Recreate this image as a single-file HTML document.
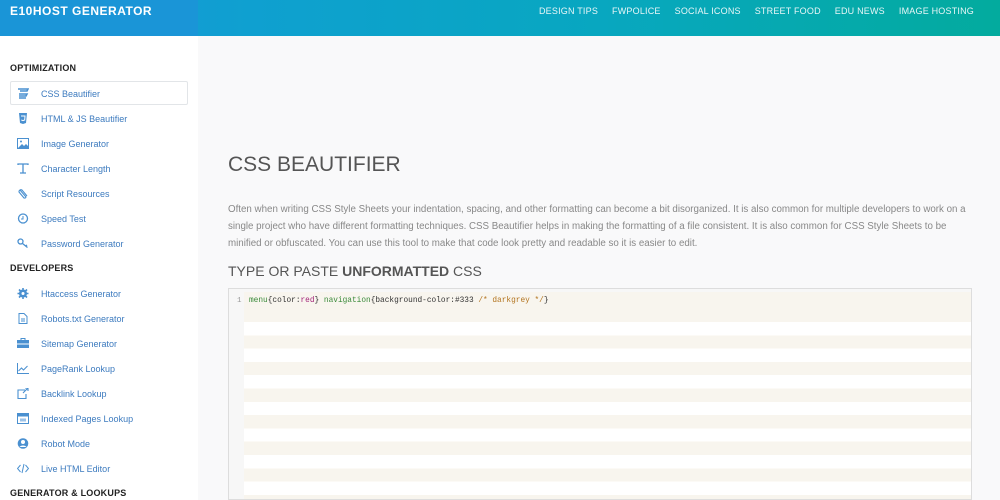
<!DOCTYPE html>
<html><head><meta charset="utf-8"><style>
*{margin:0;padding:0;box-sizing:border-box}
body{width:1000px;height:500px;overflow:hidden;background:#f9f9fa;font-family:"Liberation Sans",sans-serif;position:relative}
.hdr{position:absolute;left:0;top:0;width:1000px;height:36px;background:linear-gradient(90deg,#1b95d8 0%,#0fa0d0 25%,#08a7c0 60%,#03ab9e 100%)}
.logo{position:absolute;left:0;top:0;width:198px;height:36px;background:#1a95d7}
.logo span{position:absolute;left:10px;top:4px;color:#fff;font-weight:bold;font-size:12px;letter-spacing:.5px}
.nav{position:absolute;top:6px;right:26px;color:#e8f6f7;font-size:9px;letter-spacing:.2px;white-space:nowrap}
.nav span{margin-left:14px}
.side{position:absolute;left:0;top:36px;width:198px;height:464px;background:#fff}
.h{position:absolute;left:10px;font-size:9px;font-weight:bold;color:#222;letter-spacing:.2px}
.it{position:absolute;left:41px;font-size:9px;color:#3d7bbf}
.ic{position:absolute;left:17px;width:12px;height:11px;color:#4a90d0}
.sel{position:absolute;left:10px;top:81px;width:178px;height:24px;border:1px solid #e2e5e8;border-radius:2px;background:#fff}
h1{position:absolute;left:228px;top:153px;font-weight:normal;font-size:21px;color:#555}
.p{position:absolute;left:228px;font-size:9.75px;color:#888;white-space:nowrap}
h2{position:absolute;left:228px;top:263px;font-weight:normal;font-size:14px;color:#555}
.ed{position:absolute;left:228px;top:288px;width:744px;height:212px;border:1px solid #ddd;background:#f7f7f7}
.code{position:absolute;left:15px;top:3px;right:0;bottom:0;background:#f8f5ee;}
.stripes{position:absolute;left:0;right:0;top:30px;bottom:0;background:repeating-linear-gradient(180deg,#fff 0,#fff 13.3px,#f8f5ee 13.3px,#f8f5ee 26.6px)}
.ln{position:absolute;left:9px;top:9px;font-family:"Liberation Mono",monospace;font-size:7.5px;color:#999}
.cd{position:absolute;left:20px;top:8px;font-family:"Liberation Mono",monospace;font-size:7.8px;color:#333;white-space:nowrap}
</style></head><body>
<div class="hdr"></div>
<div class="logo"><span>E10HOST GENERATOR</span></div>
<div class="nav"><span>DESIGN TIPS</span><span>FWPOLICE</span><span>SOCIAL ICONS</span><span>STREET FOOD</span><span>EDU NEWS</span><span>IMAGE HOSTING</span></div>
<div class="side"></div>
<div class="sel"></div>
<div class="h" style="top:63px">OPTIMIZATION</div>
<div class="h" style="top:263px">DEVELOPERS</div>
<div class="h" style="top:488px">GENERATOR &amp; LOOKUPS</div>

<svg class="ic" style="top:88px" viewBox="0 0 12 11"><path d="M1 1h10l-1 2H3m-1 3h8l-1 2H2m0 2h7" stroke="#4a90d0" stroke-width="1.6" fill="none"/></svg>
<svg class="ic" style="top:113px" viewBox="0 0 12 11"><path d="M2 0h8l-1 10-3 1-3-1z" fill="#4a90d0"/><path d="M4 3h4l-.3 4-1.7.6-1.7-.6" stroke="#fff" fill="none"/></svg>
<svg class="ic" style="top:138px" viewBox="0 0 12 11"><rect x="0.5" y="0.5" width="11" height="10" fill="none" stroke="#4a90d0"/><path d="M1 10l4-4 2 2 2-2 2 2v2z" fill="#4a90d0"/><circle cx="4" cy="3.5" r="1" fill="#4a90d0"/></svg>
<svg class="ic" style="top:163px" viewBox="0 0 12 11"><path d="M1 2V1h10v1M6 1v9M3 10h6" stroke="#4a90d0" stroke-width="1.3" fill="none"/></svg>
<svg class="ic" style="top:188px" viewBox="0 0 12 11"><path d="M3 2l6 7a1.5 1.5 0 0 1-2 1L2 4a2 2 0 0 1 3-2l5 6" stroke="#4a90d0" stroke-width="1.1" fill="none"/></svg>
<svg class="ic" style="top:213px" viewBox="0 0 12 11"><circle cx="6" cy="5.5" r="4.5" fill="none" stroke="#4a90d0" stroke-width="1.3"/><path d="M6 3v3h-2" stroke="#4a90d0" fill="none"/></svg>
<svg class="ic" style="top:238px" viewBox="0 0 12 11"><circle cx="3.5" cy="3.5" r="2.5" fill="none" stroke="#4a90d0" stroke-width="1.3"/><path d="M5.5 5.5l5 4M8.5 8l1.5-1" stroke="#4a90d0" stroke-width="1.3" fill="none"/></svg>
<svg class="ic" style="top:288px" viewBox="0 0 12 11"><circle cx="6" cy="5.5" r="4" fill="#4a90d0"/><path d="M6 0v11M0.5 5.5h11M2 1.5l8 8M10 1.5l-8 8" stroke="#4a90d0" stroke-width="1.6"/><circle cx="6" cy="5.5" r="1.5" fill="#fff"/></svg>
<svg class="ic" style="top:313px" viewBox="0 0 12 11"><path d="M2 .5h5l3 3v7H2z" fill="none" stroke="#4a90d0"/><path d="M4 6h4M4 8h4" stroke="#4a90d0"/></svg>
<svg class="ic" style="top:338px" viewBox="0 0 12 11"><rect x="0" y="2" width="12" height="8" fill="#4a90d0"/><rect x="4" y="0.5" width="4" height="2" fill="none" stroke="#4a90d0"/><path d="M0 6h12" stroke="#fff"/></svg>
<svg class="ic" style="top:363px" viewBox="0 0 12 11"><path d="M.5 0v10.5H12M1.5 8l3-3 2 2 4-4" stroke="#4a90d0" fill="none"/></svg>
<svg class="ic" style="top:388px" viewBox="0 0 12 11"><path d="M8 2H1v8.5h8V6M6 5l5-5M8 0h3v3" stroke="#4a90d0" stroke-width="1.1" fill="none"/></svg>
<svg class="ic" style="top:413px" viewBox="0 0 12 11"><rect x=".5" y=".5" width="11" height="10" fill="none" stroke="#4a90d0"/><rect x="1" y="1" width="10" height="2.5" fill="#4a90d0"/><rect x="3" y="5.5" width="6" height="3" fill="#9cc3e8"/></svg>
<svg class="ic" style="top:438px" viewBox="0 0 12 11"><circle cx="6" cy="5.5" r="5.3" fill="#4a90d0"/><circle cx="6" cy="4" r="2" fill="#fff"/><path d="M2.5 9a4 3 0 0 1 7 0" fill="#fff"/></svg>
<svg class="ic" style="top:463px" viewBox="0 0 12 11"><path d="M3.5 2L.5 5.5l3 3.5M8.5 2l3 3.5-3 3.5M7 1L5 10" stroke="#4a90d0" fill="none"/></svg>

<div class="it" style="top:89px">CSS Beautifier</div>
<div class="it" style="top:114px">HTML &amp; JS Beautifier</div>
<div class="it" style="top:139px">Image Generator</div>
<div class="it" style="top:164px">Character Length</div>
<div class="it" style="top:189px">Script Resources</div>
<div class="it" style="top:214px">Speed Test</div>
<div class="it" style="top:239px">Password Generator</div>
<div class="it" style="top:289px">Htaccess Generator</div>
<div class="it" style="top:314px">Robots.txt Generator</div>
<div class="it" style="top:339px">Sitemap Generator</div>
<div class="it" style="top:364px">PageRank Lookup</div>
<div class="it" style="top:389px">Backlink Lookup</div>
<div class="it" style="top:414px">Indexed Pages Lookup</div>
<div class="it" style="top:439px">Robot Mode</div>
<div class="it" style="top:464px">Live HTML Editor</div>

<h1>CSS BEAUTIFIER</h1>
<div class="p" style="top:204px">Often when writing CSS Style Sheets your indentation, spacing, and other formatting can become a bit disorganized. It is also common for multiple developers to work on a</div>
<div class="p" style="top:221px">single project who have different formatting techniques. CSS Beautifier helps in making the formatting of a file consistent. It is also common for CSS Style Sheets to be</div>
<div class="p" style="top:238px">minified or obfuscated. You can use this tool to make that code look pretty and readable so it is easier to edit.</div>
<h2>TYPE OR PASTE <b>UNFORMATTED</b> CSS</h2>
<div class="ed">
 <div class="code"><div class="stripes"></div></div>
 <div class="ln" style="left:8px;top:8px">1</div>
 <div class="cd"><span style="color:#3a8a3a">menu</span>{<span style="color:#333">color</span>:<span style="color:#a3267a">red</span>} <span style="color:#3a8a3a">navigation</span>{background-color:<span style="color:#333">#333</span> <span style="color:#b3741f">/* darkgrey */</span>}</div>
</div>
</body></html>
